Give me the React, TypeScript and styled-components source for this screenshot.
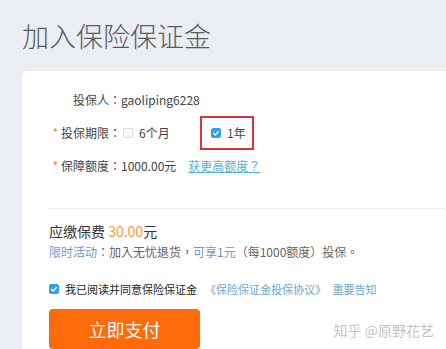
import React from "react";
import styled, { createGlobalStyle } from "styled-components";

const GlobalStyle = createGlobalStyle`
  html, body {
    margin: 0;
    padding: 0;
    background: #eaeef2;
    font-family: "Noto Sans CJK TC", "Noto Sans CJK SC", "Noto Sans", sans-serif;
    overflow: hidden;
  }
`;

const Page = styled.div`
  width: 446px;
  height: 349px;
  display: flex;
  flex-direction: column;
  background: #eaeef2;
  overflow: hidden;
`;

const Title = styled.h1`
  margin: 0;
  height: 72px;
  padding-left: 22px;
  display: flex;
  align-items: center;
  font-family: "Noto Sans CJK SC", sans-serif;
  font-size: 27px;
  font-weight: 300;
  color: #5a5a5a;
`;

const Card = styled.div`
  position: relative;
  flex: 1;
  margin-left: 22px;
  background: #fff;
  border-radius: 5px 0 0 0;
`;

const Form = styled.div`
  padding-top: 12px;
  padding-bottom: 26px;
  display: flex;
  flex-direction: column;
`;

const Row = styled.div`
  height: 33px;
  display: flex;
  align-items: center;
  font-size: 12px;
  color: #444;
`;

const Label = styled.span`
  width: 99px;
  flex: none;
  text-align: right;
  color: #444;
`;

const Star = styled.span`
  color: #f08a24;
  margin-right: 3px;
`;

const Value = styled.span`
  color: #444;
`;

const Option = styled.label<{ $width?: number }>`
  display: flex;
  align-items: center;
  gap: 6px;
  width: ${(p) => (p.$width ? `${p.$width}px` : "auto")};
  margin-left: 2px;
  color: #444;
`;

const Highlight = styled.div`
  box-sizing: border-box;
  width: 54px;
  height: 34px;
  border: 2px solid #d9343b;
  display: flex;
  align-items: center;
  gap: 6px;
  padding-left: 9px;
  color: #444;
`;

const Box = styled.span<{ $checked?: boolean }>`
  box-sizing: border-box;
  width: 10px;
  height: 10px;
  flex: none;
  border-radius: 2px;
  border: 1px solid ${(p) => (p.$checked ? "#3a9ee4" : "#dcdcdc")};
  background: ${(p) => (p.$checked ? "#3a9ee4" : "#fafafa")};
  display: flex;
  align-items: center;
  justify-content: center;
`;

const Link = styled.a`
  margin-left: 12px;
  color: #5cb0cc;
  text-decoration: underline;
`;

const Summary = styled.div`
  margin-left: 26px;
  border-top: 1px solid #f0f0f0;
  padding-left: 1px;
  display: flex;
  flex-direction: column;
`;

const Fee = styled.div`
  margin-top: 12px;
  line-height: 20px;
  font-size: 14px;
  color: #333;
`;

const Amount = styled.span`
  color: #f39a35;
`;

const Promo = styled.div`
  margin-top: 1px;
  line-height: 20px;
  font-size: 12px;
  color: #666;
`;

const Blue = styled.span`
  color: #6a9bc9;
`;

const Agree = styled.div`
  margin-top: 17px;
  height: 20px;
  display: flex;
  align-items: center;
  gap: 6px;
  font-size: 11px;
  color: #222;
`;

const AgreeLinks = styled.span`
  margin-left: 2px;
  color: #6aa8c9;
  word-spacing: 4px;
`;

const PayButton = styled.button`
  margin-top: 10px;
  width: 151px;
  height: 40px;
  border: none;
  border-radius: 4px;
  background: #ff6a0a;
  color: #fff;
  font-family: "Noto Sans CJK SC", sans-serif;
  font-size: 18px;
  padding: 0;
`;

const Watermark = styled.div`
  position: absolute;
  right: 12px;
  bottom: 9px;
  font-size: 14px;
  color: #c4c4c4;
`;

const Check = () => (
  <svg width="8" height="8" viewBox="0 0 8 8">
    <path d="M1.3 4.1 L3.2 5.9 L6.7 2.1" fill="none" stroke="#fff" strokeWidth="1.4" />
  </svg>
);

const CheckBox = ({ checked }: { checked?: boolean }) => (
  <Box $checked={checked}>{checked ? <Check /> : null}</Box>
);

export default function App() {
  return (
    <>
      <GlobalStyle />
      <Page>
        <Title>加入保险保证金</Title>
        <Card>
          <Form>
            <Row>
              <Label>投保人：</Label>
              <Value>gaoliping6228</Value>
            </Row>
            <Row>
              <Label>
                <Star>*</Star>投保期限：
              </Label>
              <Option $width={77}>
                <CheckBox />
                6个月
              </Option>
              <Highlight>
                <CheckBox checked />
                1年
              </Highlight>
            </Row>
            <Row>
              <Label>
                <Star>*</Star>保障额度：
              </Label>
              <Value>1000.00元</Value>
              <Link>获更高额度？</Link>
            </Row>
          </Form>
          <Summary>
            <Fee>
              应缴保费 <Amount>30.00</Amount>元
            </Fee>
            <Promo>
              <Blue>限时活动</Blue>：加入无忧退货，<Blue>可享1元</Blue>（每1000额度）投保。
            </Promo>
            <Agree>
              <CheckBox checked />
              我已阅读并同意保险保证金
              <AgreeLinks>《保险保证金投保协议》 重要告知</AgreeLinks>
            </Agree>
            <PayButton>立即支付</PayButton>
          </Summary>
          <Watermark>知乎 @原野花艺</Watermark>
        </Card>
      </Page>
    </>
  );
}
